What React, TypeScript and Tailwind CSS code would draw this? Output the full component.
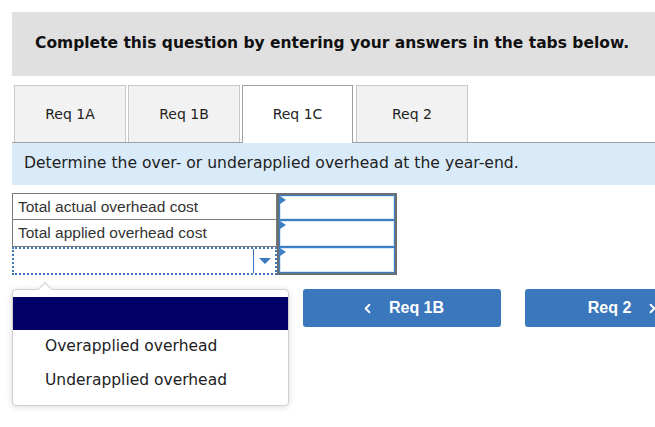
import { ChevronLeft, ChevronRight } from "lucide-react";

const tabs = ["Req 1A", "Req 1B", "Req 1C", "Req 2"];
const activeTab = "Req 1C";

const rows = ["Total actual overhead cost", "Total applied overhead cost"];

const options = ["Overapplied overhead", "Underapplied overhead"];

function AmountCell() {
  return (
    <div className="relative h-full w-[120px] border-x-2 border-[#6e6e6e] bg-white">
      <div className="h-full border border-[#3f7fc4] shadow-[inset_0_0_0_1px_#d6e6f7]" />
      <div className="absolute left-[1px] top-[1px] h-0 w-0 border-y-[4px] border-l-[6px] border-y-transparent border-l-[#3f7fc4]" />
    </div>
  );
}

export default function App() {
  return (
    <div className="relative h-[427px] w-[655px] overflow-hidden bg-white">
      <div className="ml-[12px] mt-[12px] flex h-[64px] items-center bg-[#e0e0e0] pl-[23px] font-['DejaVu_Sans',sans-serif] text-[15.5px] font-bold text-[#111]">
        Complete this question by entering your answers in the tabs below.
      </div>

      <div className="ml-[12px] mt-[9px] flex h-[58px] items-end border-b border-[#a0a0a0] pl-[2px]">
        {tabs.map((tab, i) => {
          const active = tab === activeTab;
          return (
            <div
              key={tab}
              className={
                active
                  ? "-mb-px ml-[2px] flex h-[58px] w-[111px] items-center justify-center border border-b-0 border-[#a0a0a0] bg-white font-['DejaVu_Sans',sans-serif] text-[14px] text-[#222]"
                  : i === 0
                  ? "flex h-[57px] w-[112px] items-center justify-center border border-b-0 border-[#c8c8c8] bg-[#f2f2f2] font-['DejaVu_Sans',sans-serif] text-[14px] text-[#222]"
                  : "ml-[2px] flex h-[57px] w-[112px] items-center justify-center border border-b-0 border-[#c8c8c8] bg-[#f2f2f2] font-['DejaVu_Sans',sans-serif] text-[14px] text-[#222] last:ml-[3px]"
              }
            >
              {tab}
            </div>
          );
        })}
      </div>

      <div className="ml-[12px] flex h-[42px] items-center bg-[#d9eaf8] pl-[12px] font-['DejaVu_Sans',sans-serif] text-[15.6px] text-[#222]">
        Determine the over- or underapplied overhead at the year-end.
      </div>

      <div className="ml-[12px] mt-[8px] w-[385px] font-['Liberation_Sans',Arial,sans-serif] text-[15.5px] text-[#333]">
        {rows.map((row, i) => (
          <div key={row} className="flex h-[27px]">
            <div
              className={
                i === 0
                  ? "flex w-[265px] items-center border border-[#7a7a7a] pl-[5px]"
                  : "flex w-[265px] items-center border border-t-0 border-[#7a7a7a] pl-[5px]"
              }
            >
              {row}
            </div>
            <div
              className={
                i === 0
                  ? "h-[27px] border-t-2 border-[#6e6e6e]"
                  : "h-[27px]"
              }
            >
              <AmountCell />
            </div>
          </div>
        ))}
        <div className="flex h-[28px]">
          <div className="flex w-[265px] border-2 border-dotted border-[#3a78c0]">
            <div className="flex-1" />
            <div className="flex w-[22px] items-center justify-center border-l border-[#3a78c0]">
              <div className="h-0 w-0 border-x-[6px] border-t-[6px] border-x-transparent border-t-[#3a78c0]" />
            </div>
          </div>
          <div className="h-[28px] border-b-2 border-[#6e6e6e]">
            <AmountCell />
          </div>
        </div>
      </div>

      <div className="ml-[303px] mt-[14px] flex gap-[24px] font-['Liberation_Sans',Arial,sans-serif] text-[16px] font-bold text-white">
        <div className="flex h-[38px] w-[198px] shrink-0 items-center justify-center gap-[14px] rounded-[3px] bg-[#3a77bc]">
          <ChevronLeft size={15} strokeWidth={3} />
          <span>Req 1B</span>
        </div>
        <div className="flex h-[38px] w-[198px] shrink-0 items-center justify-center gap-[14px] rounded-[3px] bg-[#3a77bc]">
          <span>Req 2</span>
          <ChevronRight size={15} strokeWidth={3} />
        </div>
      </div>

      <div className="absolute left-[12px] top-[289px] h-[117px] w-[277px] rounded-[4px] border border-[#cfcfcf] bg-white shadow-[0_1px_6px_rgba(0,0,0,0.15)]">
        <div className="absolute -top-[6px] left-[27px] h-[10px] w-[10px] rotate-45 border-l border-t border-[#cfcfcf] bg-white" />
        <div className="relative mt-[7px] h-[33px] bg-[#000066]" />
        {options.map((opt) => (
          <div
            key={opt}
            className="flex h-[34px] items-center pl-[32px] font-['DejaVu_Sans',sans-serif] text-[15.5px] text-[#222]"
          >
            {opt}
          </div>
        ))}
      </div>
    </div>
  );
}
